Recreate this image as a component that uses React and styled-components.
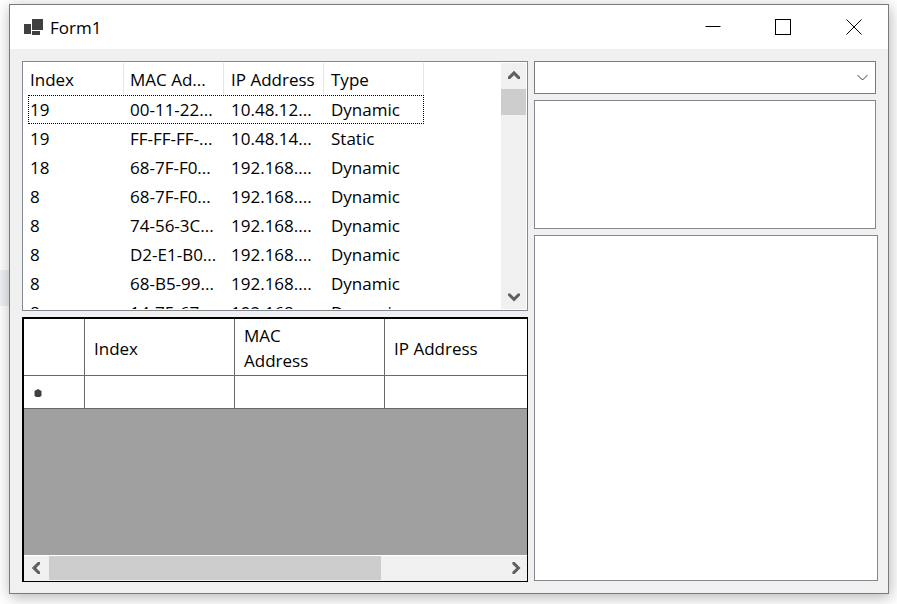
import React from "react";
import styled, { createGlobalStyle } from "styled-components";

const Global = createGlobalStyle`
  html, body { margin: 0; padding: 0; background: #ffffff; }
  body { font-family: "Open Sans", "Noto Sans", "Liberation Sans", sans-serif; width: 897px; height: 604px; overflow: hidden; }
  * { box-sizing: border-box; }
`;

const Page = styled.div`
  height: 604px;
  padding: 4px 0 0 9px;
  background: linear-gradient(#eef0f4, #eef0f4) 0 270px / 9px 36px no-repeat;
`;
const Window = styled.div`
  width: 880px;
  height: 590px;
  border: 1px solid #7a7a7a;
  background: #f0f0f0;
  box-shadow: 1px 3px 14px rgba(0, 0, 0, 0.3);
  display: flex;
  flex-direction: column;
`;
const TitleBar = styled.div`
  height: 44px;
  background: #fff;
  display: flex;
  align-items: center;
  padding-left: 13px;
  flex: none;
`;
const AppIcon = styled.svg`
  width: 20px;
  height: 18px;
  margin-right: 7px;
  flex: none;
`;
const Title = styled.span`
  font-size: 17px;
  color: #000;
  flex: 1;
`;
const CaptionButton = styled.div`
  width: 70.5px;
  height: 44px;
  padding-left: 2px;
  display: flex;
  align-items: center;
  justify-content: center;
`;
const Content = styled.div`
  flex: 1;
  display: grid;
  grid-template-columns: 506px 344px;
  column-gap: 6px;
  padding: 12px 0 0 12px;
`;
const LeftColumn = styled.div`
  display: flex;
  flex-direction: column;
  gap: 6px;
`;
const RightColumn = styled.div`
  display: flex;
  flex-direction: column;
  gap: 6px;
`;
const ListBox = styled.div`
  width: 506px;
  height: 250px;
  border: 1px solid #828790;
  background: #fff;
  padding: 1px;
  display: flex;
  overflow: hidden;
`;
const ListBody = styled.div`
  flex: 1;
  overflow: hidden;
  font-size: 17px;
  color: #000;
`;
const ListHeader = styled.div`
  display: grid;
  grid-template-columns: 100px 100px 100px 100px;
  height: 32px;
  width: 400px;
`;
const HeaderCell = styled.div`
  border-right: 1px solid #e5e5e5;
  padding-left: 6px;
  line-height: 34px;
  white-space: nowrap;
  overflow: hidden;
  &:nth-child(n + 3) { padding-left: 7px; }
`;
const ListRow = styled.div`
  display: grid;
  grid-template-columns: 100px 100px 100px 96px;
  height: 29px;
  width: 396px;
  margin-left: 4px;
  line-height: 30px;
  outline: ${(p) => (p.$focused ? "1px dotted #000" : "none")};
  outline-offset: -1px;
`;
const ListCell = styled.div`
  padding-left: 2px;
  white-space: nowrap;
  overflow: hidden;
  &:nth-child(n + 3) { padding-left: 3px; }
`;
const VScroll = styled.div`
  width: 25px;
  height: 100%;
  background: #f0f0f0;
  display: flex;
  flex-direction: column;
  flex: none;
`;
const ScrollButton = styled.div`
  height: 26px;
  flex: none;
  display: flex;
  align-items: center;
  justify-content: center;
`;
const VThumb = styled.div`
  height: 26px;
  background: #cdcdcd;
  flex: none;
`;
const VTrack = styled.div`
  flex: 1;
`;
const Grid = styled.div`
  width: 506px;
  height: 265px;
  border: 1px solid #000;
  border-top-width: 2px;
  border-left-width: 2px;
  background: #a0a0a0;
  display: flex;
  flex-direction: column;
  overflow: hidden;
`;
const GridArea = styled.div`
  flex: 1;
  overflow: hidden;
`;
const GridRow = styled.div`
  display: grid;
  grid-template-columns: 61px 150px 150px 150px;
  width: 511px;
  height: ${(p) => p.$height}px;
  background: #fff;
  border-bottom: 1px solid #696969;
`;
const GridCell = styled.div`
  border-right: 1px solid #696969;
  font-size: 17px;
  line-height: 25px;
  color: #000;
  padding: 2px 0 0 9px;
  display: flex;
  align-items: center;
  overflow: hidden;
`;
const RowGlyph = styled.svg`
  width: 10px;
  height: 10px;
`;
const HScroll = styled.div`
  height: 26px;
  flex: none;
  background: #f0f0f0;
  border-top: 1px solid #fff;
  display: flex;
  border-bottom: 1px solid #f0f0f0;
`;
const HButton = styled.div`
  width: 25px;
  flex: none;
  display: flex;
  align-items: center;
  justify-content: center;
`;
const HThumb = styled.div`
  width: 332px;
  background: #cdcdcd;
  flex: none;
`;
const HTrack = styled.div`
  flex: 1;
`;
const Combo = styled.div`
  width: 342px;
  height: 33px;
  border: 1px solid #7a7a7a;
  background: #fff;
  display: flex;
  align-items: center;
  justify-content: flex-end;
  padding-right: 7px;
`;
const SmallText = styled.div`
  width: 342px;
  height: 129px;
  border: 1px solid #828790;
  background: #fff;
`;
const LargeText = styled.div`
  width: 344px;
  height: 346px;
  border: 1px solid #828790;
  background: #fff;
`;

const arrows = {
  up: "M0 8 L7 1 L14 8 L14 10.5 L11.5 10.5 L7 6 L2.5 10.5 L0 10.5 Z",
  down: "M0 4 L2.5 4 L7 8.5 L11.5 4 L14 4 L14 6.5 L7 13.5 L0 6.5 Z",
  left: "M8 0 L1 7 L8 14 L10.5 14 L10.5 11.5 L6 7 L10.5 2.5 L10.5 0 Z",
  right: "M4 0 L4 2.5 L8.5 7 L4 11.5 L4 14 L6.5 14 L13.5 7 L6.5 0 Z",
};
const Arrow = ({ dir }) => (
  <svg width="12" height="12" viewBox="0 0 14 14">
    <path d={arrows[dir]} fill="#606060" />
  </svg>
);

const rows = [
  ["19", "00-11-22...", "10.48.12...", "Dynamic"],
  ["19", "FF-FF-FF-...", "10.48.14...", "Static"],
  ["18", "68-7F-F0...", "192.168....", "Dynamic"],
  ["8", "68-7F-F0...", "192.168....", "Dynamic"],
  ["8", "74-56-3C...", "192.168....", "Dynamic"],
  ["8", "D2-E1-B0...", "192.168....", "Dynamic"],
  ["8", "68-B5-99...", "192.168....", "Dynamic"],
  ["8", "14-75-67...", "192.168....", "Dynamic"],
];

export default function App() {
  return (
    <>
      <Global />
      <Page>
        <Window>
          <TitleBar>
            <AppIcon viewBox="0 0 20 18">
              <rect x="9" y="1" width="11" height="11" fill="#404040" />
              <rect x="1" y="6" width="7" height="10" fill="#404040" />
              <rect x="9" y="13" width="8" height="4" fill="#404040" />
            </AppIcon>
            <Title>Form1</Title>
            <CaptionButton>
              <svg width="16" height="16" viewBox="0 0 16 16">
                <path d="M0.5 7.5 H15.5" stroke="#000" strokeWidth="1" />
              </svg>
            </CaptionButton>
            <CaptionButton>
              <svg width="16" height="16" viewBox="0 0 16 16">
                <rect x="0.5" y="0.5" width="15" height="15" fill="none" stroke="#000" strokeWidth="1" />
              </svg>
            </CaptionButton>
            <CaptionButton>
              <svg width="16" height="16" viewBox="0 0 16 16">
                <path d="M0.5 0.5 L15.5 15.5 M15.5 0.5 L0.5 15.5" stroke="#000" strokeWidth="1" />
              </svg>
            </CaptionButton>
          </TitleBar>
          <Content>
            <LeftColumn>
              <ListBox>
                <ListBody>
                  <ListHeader>
                    <HeaderCell>Index</HeaderCell>
                    <HeaderCell>MAC Ad...</HeaderCell>
                    <HeaderCell>IP Address</HeaderCell>
                    <HeaderCell>Type</HeaderCell>
                  </ListHeader>
                  {rows.map((r, i) => (
                    <ListRow key={i} $focused={i === 0}>
                      {r.map((c, j) => (
                        <ListCell key={j}>{c}</ListCell>
                      ))}
                    </ListRow>
                  ))}
                </ListBody>
                <VScroll>
                  <ScrollButton><Arrow dir="up" /></ScrollButton>
                  <VThumb />
                  <VTrack />
                  <ScrollButton><Arrow dir="down" /></ScrollButton>
                </VScroll>
              </ListBox>
              <Grid>
                <GridArea>
                  <GridRow $height={57}>
                    <GridCell />
                    <GridCell>Index</GridCell>
                    <GridCell>MAC<br />Address</GridCell>
                    <GridCell>IP Address</GridCell>
                  </GridRow>
                  <GridRow $height={33}>
                    <GridCell>
                      <RowGlyph viewBox="0 0 10 10">
                        <path d="M5 1 L8.5 3 L8.5 7.5 L7 9 L3 9 L1.5 7.5 L1.5 3 Z" fill="#404040" />
                      </RowGlyph>
                    </GridCell>
                    <GridCell />
                    <GridCell />
                    <GridCell />
                  </GridRow>
                </GridArea>
                <HScroll>
                  <HButton><Arrow dir="left" /></HButton>
                  <HThumb />
                  <HTrack />
                  <HButton><Arrow dir="right" /></HButton>
                </HScroll>
              </Grid>
            </LeftColumn>
            <RightColumn>
              <Combo>
                <svg width="11" height="7" viewBox="0 0 11 7">
                  <path d="M0.5 1 L5.5 6 L10.5 1" fill="none" stroke="#404040" strokeWidth="1" />
                </svg>
              </Combo>
              <SmallText />
              <LargeText />
            </RightColumn>
          </Content>
        </Window>
      </Page>
    </>
  );
}
